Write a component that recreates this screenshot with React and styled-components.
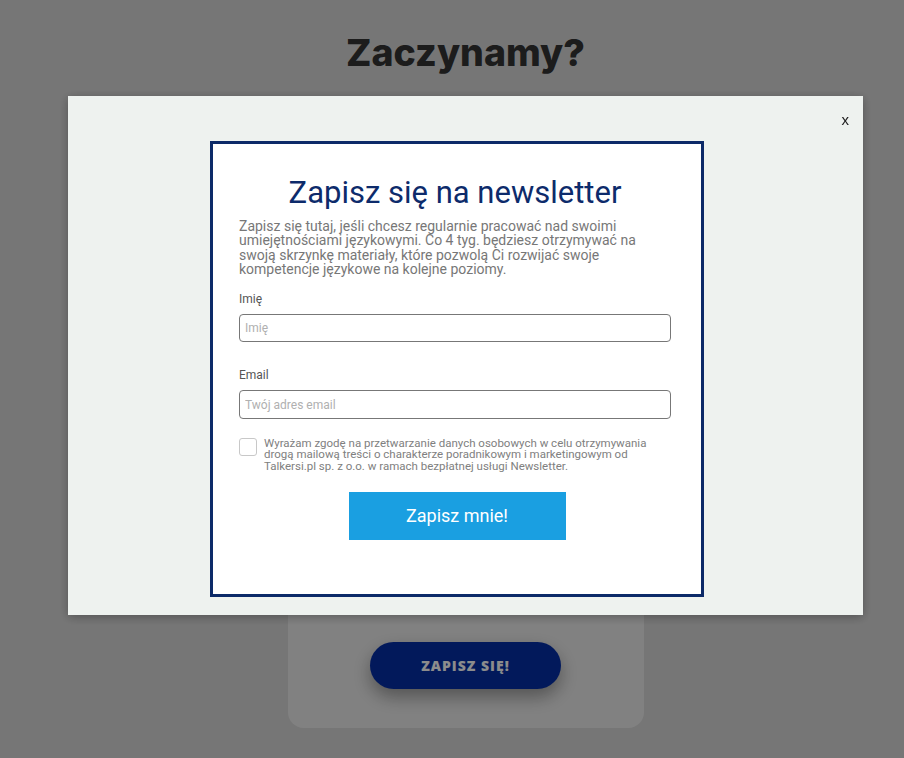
import React from 'react';
import styled, { createGlobalStyle } from 'styled-components';

const GlobalStyle = createGlobalStyle`
  * { box-sizing: border-box; }
  body {
    margin: 0;
    background: #d8d8d8;
    font-family: Roboto, 'Liberation Sans', sans-serif;
  }
`;

const Page = styled.main`
  width: 100%;
  min-height: 758px;
  padding-left: 27px;
  display: flex;
  flex-direction: column;
  align-items: center;
`;

const Heading = styled.h1`
  margin: 31px 0 0;
  font-family: Inter, 'Open Sans', sans-serif;
  font-weight: 800;
  font-size: 37.5px;
  line-height: 44px;
  color: #333;
`;

const Card = styled.section`
  width: 356px;
  margin-top: 46px;
  padding: 470px 24px 39px;
  background: #ececec;
  border-radius: 16px;
  display: flex;
  flex-direction: column;
  align-items: center;
`;

const CardText = styled.p`
  margin: 0;
  font-size: 15px;
  line-height: 22px;
  color: #222;
  text-align: center;
`;

const CtaButton = styled.button`
  margin-top: 29px;
  width: 191px;
  height: 47px;
  border: none;
  border-radius: 24px;
  background: #052fa7;
  color: #fff;
  font-family: 'Open Sans', sans-serif;
  font-weight: 800;
  font-size: 14px;
  letter-spacing: 1px;
  box-shadow: 0 8px 18px rgba(0, 0, 0, 0.35);
`;

const Overlay = styled.div`
  position: fixed;
  inset: 0;
  background: rgba(0, 0, 0, 0.45);
  padding: 96px 0 0 27px;
  display: flex;
  justify-content: center;
  align-items: flex-start;
`;

const Modal = styled.div`
  position: relative;
  width: 795px;
  height: 519px;
  padding: 45px 159px 18px 142px;
  background: #eef2ef;
  box-shadow: 0 2px 10px rgba(0, 0, 0, 0.3);
`;

const Close = styled.span`
  position: absolute;
  top: 15px;
  right: 14px;
  font-family: 'Liberation Sans', sans-serif;
  font-size: 15px;
  color: #222;
`;

const Box = styled.form`
  height: 456px;
  border: 3px solid #0c2a68;
  background: #fff;
  padding: 30px 30px 54px 26px;
  display: flex;
  flex-direction: column;
`;

const Title = styled.h2`
  margin: 0;
  text-align: center;
  font-weight: 400;
  font-size: 31px;
  line-height: 37px;
  color: #0d2b6b;
`;

const Intro = styled.p`
  margin: 8px 0 0;
  font-size: 14px;
  line-height: 14.4px;
  color: #777;
`;

const Label = styled.label`
  margin-top: ${(p) => p.$gap}px;
  font-size: 12px;
  line-height: 14px;
  color: #555;
`;

const Input = styled.input`
  margin-top: 8px;
  width: 100%;
  height: 29px;
  border: 1px solid #777;
  border-radius: 4px;
  padding: 0 5px;
  font-family: Roboto, sans-serif;
  font-size: 12px;
  &::placeholder { color: #b0b0b0; }
`;

const Consent = styled.div`
  margin-top: 19px;
  display: flex;
  gap: 7px;
  align-items: flex-start;
`;

const Check = styled.span`
  flex: none;
  width: 18px;
  height: 18px;
  border: 1px solid #c8c8c8;
  border-radius: 3px;
`;

const ConsentText = styled.p`
  margin: 0;
  max-width: 395px;
  font-size: 11.5px;
  line-height: 11.6px;
  color: #808080;
`;

const Submit = styled.button`
  margin: 19px auto 0;
  width: 217px;
  height: 49px;
  border: none;
  background: #1a9fe1;
  color: #fff;
  font-family: Roboto, sans-serif;
  font-size: 18px;
  position: relative;
  left: 2px;
`;

export default function App() {
  return (
    <>
      <GlobalStyle />
      <Page>
        <Heading>Zaczynamy?</Heading>
        <Card>
          <CardText>co tydzień nowy materiał gotowy</CardText>
          <CtaButton>ZAPISZ SIĘ!</CtaButton>
        </Card>
      </Page>
      <Overlay>
        <Modal>
          <Close>x</Close>
          <Box>
            <Title>Zapisz się na newsletter</Title>
            <Intro>
              Zapisz się tutaj, jeśli chcesz regularnie pracować nad swoimi umiejętnościami
              językowymi. Co 4 tyg. będziesz otrzymywać na swoją skrzynkę materiały, które
              pozwolą Ci rozwijać swoje kompetencje językowe na kolejne poziomy.
            </Intro>
            <Label $gap={15}>Imię</Label>
            <Input placeholder="Imię" />
            <Label $gap={26}>Email</Label>
            <Input placeholder="Twój adres email" />
            <Consent>
              <Check />
              <ConsentText>
                Wyrażam zgodę na przetwarzanie danych osobowych w celu otrzymywania drogą
                mailową treści o charakterze poradnikowym i marketingowym od Talkersi.pl sp. z
                o.o. w ramach bezpłatnej usługi Newsletter.
              </ConsentText>
            </Consent>
            <Submit type="button">Zapisz mnie!</Submit>
          </Box>
        </Modal>
      </Overlay>
    </>
  );
}
